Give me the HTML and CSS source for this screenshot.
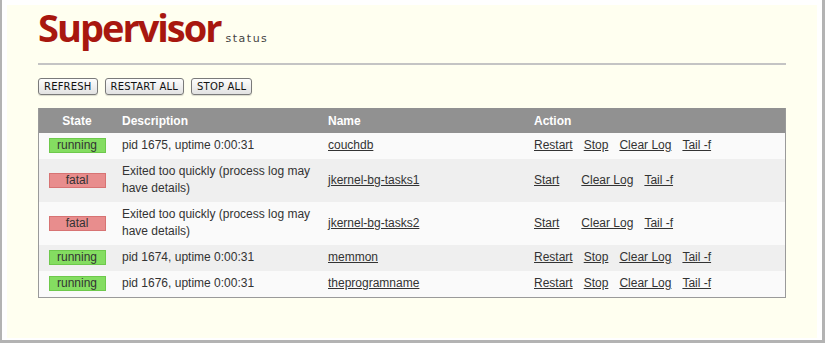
FILE: index.html
```html
<!DOCTYPE html>
<html lang="en">
<head>
  <meta charset="UTF-8">
  <title>Supervisor Status</title>
  <link rel="stylesheet" href="styles.css">
</head>
<body>
  <div class="window">
    <div class="page">
      <header class="masthead">
        <h1 class="logo">Supervisor</h1>
        <span class="subtitle">status</span>
      </header>

      <div class="toolbar">
        <button class="btn">Refresh</button>
        <button class="btn">Restart All</button>
        <button class="btn">Stop All</button>
      </div>

      <table class="procs">
        <thead>
          <tr>
            <th class="state">State</th>
            <th class="desc">Description</th>
            <th class="name">Name</th>
            <th class="action">Action</th>
          </tr>
        </thead>
        <tbody>
          <tr>
            <td class="state"><span class="status running">running</span></td>
            <td>pid 1675, uptime 0:00:31</td>
            <td><a href="#">couchdb</a></td>
            <td class="action">
              <a href="#">Restart</a><a href="#">Stop</a><a href="#">Clear Log</a><a href="#">Tail -f</a>
            </td>
          </tr>
          <tr class="shade">
            <td class="state"><span class="status fatal">fatal</span></td>
            <td>Exited too quickly (process log may have details)</td>
            <td><a href="#">jkernel-bg-tasks1</a></td>
            <td class="action">
              <a href="#">Start</a><span class="empty"></span><a href="#">Clear Log</a><a href="#">Tail -f</a>
            </td>
          </tr>
          <tr>
            <td class="state"><span class="status fatal">fatal</span></td>
            <td>Exited too quickly (process log may have details)</td>
            <td><a href="#">jkernel-bg-tasks2</a></td>
            <td class="action">
              <a href="#">Start</a><span class="empty"></span><a href="#">Clear Log</a><a href="#">Tail -f</a>
            </td>
          </tr>
          <tr class="shade">
            <td class="state"><span class="status running">running</span></td>
            <td>pid 1674, uptime 0:00:31</td>
            <td><a href="#">memmon</a></td>
            <td class="action">
              <a href="#">Restart</a><a href="#">Stop</a><a href="#">Clear Log</a><a href="#">Tail -f</a>
            </td>
          </tr>
          <tr>
            <td class="state"><span class="status running">running</span></td>
            <td>pid 1676, uptime 0:00:31</td>
            <td><a href="#">theprogramname</a></td>
            <td class="action">
              <a href="#">Restart</a><a href="#">Stop</a><a href="#">Clear Log</a><a href="#">Tail -f</a>
            </td>
          </tr>
        </tbody>
      </table>
    </div>
  </div>
</body>
</html>
```

FILE: styles.css
```css
html, body {
  margin: 0;
  height: 100%;
}

body {
  background: #fff;
  font-family: 'Liberation Sans', Arial, sans-serif;
  color: #333;
  overflow: hidden;
}

.window {
  box-sizing: border-box;
  height: 343px;
  border-left: 2px solid #b3b3b3;
  border-right: 3px solid #b3b3b3;
  border-bottom: 3px solid #b3b3b3;
  padding: 5px 5px 2px 5px;
}

.page {
  height: 100%;
  background: #fffff0;
  padding: 0 31px;
}

.masthead {
  display: flex;
  align-items: baseline;
  height: 58px;
  border-bottom: 2px solid #c4c4c4;
}

.logo {
  margin: 0;
  font-family: 'Open Sans', sans-serif;
  font-weight: 700;
  font-size: 38px;
  letter-spacing: -2px;
  color: #a8170f;
  line-height: 44px;
}

.subtitle {
  margin-left: 5px;
  font-family: 'DejaVu Sans', sans-serif;
  font-size: 11px;
  letter-spacing: 1.5px;
  color: #444;
}

.toolbar {
  display: flex;
  gap: 7px;
  margin: 13px 0;
}

.btn {
  font-family: 'DejaVu Sans', sans-serif;
  font-size: 10px;
  letter-spacing: 0.2px;
  text-transform: uppercase;
  color: #111;
  height: 17px;
  padding: 0 5px;
  border: 1px solid #7a7a7a;
  border-radius: 3px;
  background: linear-gradient(#fdfdfd, #e2e2e2);
  box-shadow: 0 1px 1px rgba(0,0,0,0.15);
}

.procs {
  width: 748px;
  border-collapse: collapse;
  table-layout: fixed;
  border: 1px solid #9a9a9a;
  border-top: none;
  font-size: 12px;
}

.procs th {
  background: #919191;
  color: #fff;
  font-weight: 700;
  text-align: left;
  height: 25px;
  padding: 0 7px;
}

.procs th.state {
  width: 62px;
  text-align: center;
}

.procs th.desc,
.procs th.name {
  width: 192px;
}

.procs td {
  padding: 4px 7px 5px;
  line-height: 17px;
  background: #fafafa;
  vertical-align: middle;
}

.procs tr.shade td {
  background: #efefef;
}

.procs td.state {
  text-align: center;
  padding: 4px 0 5px;
}

.procs a {
  color: #333;
  text-decoration: underline;
}

.action a {
  margin-right: 11px;
}

.action .empty {
  display: inline-block;
  width: 0;
  margin-right: 11px;
}

.status {
  display: inline-block;
  width: 55px;
  line-height: 13px;
  font-size: 12px;
  color: #333;
  border: 1px solid;
}

.running {
  background: #84dd61;
  border-color: #6ec94c;
}

.fatal {
  background: #e88d8d;
  border-color: #d77373;
}
```
